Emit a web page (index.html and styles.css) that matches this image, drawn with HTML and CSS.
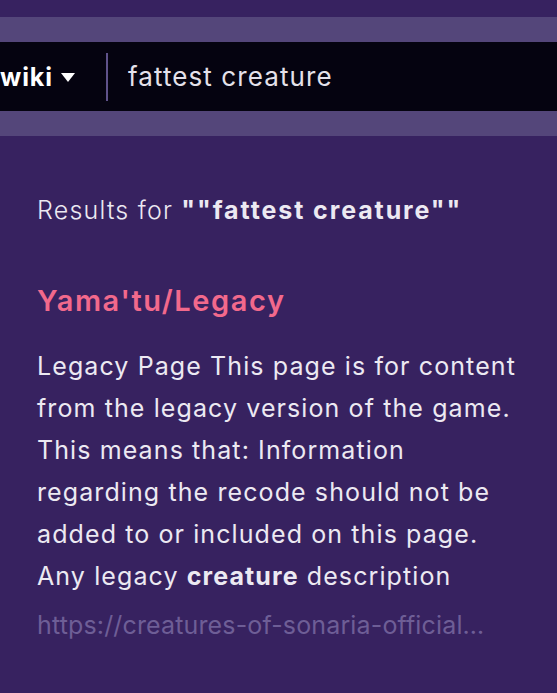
FILE: index.html
```html
<!doctype html>
<html lang="en">
<head>
  <meta charset="UTF-8">
  <meta name="viewport" content="width=device-width, initial-scale=1.0">
  <title>Search results</title>
  <link rel="stylesheet" href="styles.css">
</head>
<body>

<div class="top-gap"></div>

<div class="search-wrap">
  <div class="search-bar">
    <button class="scope">wiki <span class="caret"></span></button>
    <span class="divider"></span>
    <span class="query">fattest creature</span>
  </div>
</div>

<div class="results">
  <p class="summary">Results for <strong>""fattest creature""</strong></p>

  <div class="result">
    <a class="result-title" href="#">Yama'tu/Legacy</a>
    <p class="snippet">Legacy Page This page is for content from the legacy version of the game. This means that: Information regarding the recode should not be added to or included on this page. Any legacy <strong>creature</strong> description</p>
    <div class="result-url">https://creatures-of-sonaria-official.fandom.com/wiki/Yama%27tu/Legacy</div>
  </div>
</div>

</body>
</html>
```

FILE: styles.css
```css
body {
  margin: 0;
  background-color: #372260;
  font-family: 'Inter', 'Noto Sans', sans-serif;
  color: #ece9f2;
  overflow: hidden;
}

.top-gap {
  height: 17px;
}

.search-wrap {
  background-color: #54467a;
  padding: 25px 0;
}

.search-bar {
  background-color: #050310;
  height: 69px;
  display: flex;
  align-items: center;
}

.scope {
  background: none;
  border: none;
  padding: 0;
  margin-left: 0;
  color: #ffffff;
  font-family: inherit;
  font-size: 25px;
  font-weight: 700;
  letter-spacing: 0.9px;
  display: flex;
  align-items: center;
  gap: 8px;
}

.caret {
  width: 0;
  height: 0;
  border-left: 7.5px solid transparent;
  border-right: 7.5px solid transparent;
  border-top: 9px solid #ffffff;
  margin-top: 2px;
}

.divider {
  width: 2px;
  height: 48px;
  background-color: #5f528a;
  margin: 0 20px 0 31px;
}

.query {
  font-size: 26px;
  letter-spacing: 1.1px;
  color: #e4e1ea;
}

.results {
  padding: 58px 32px 0 37px;
}

.summary {
  margin: 0;
  font-size: 25px;
  font-weight: 300;
  letter-spacing: 1.2px;
  line-height: 32px;
}

.summary strong {
  font-weight: 700;
  letter-spacing: 1.9px;
}

.result {
  margin-top: 57px;
}

.result-title {
  display: block;
  color: #f2698c;
  font-size: 29px;
  font-weight: 600;
  letter-spacing: 1.6px;
  text-decoration: none;
  line-height: 36px;
}

.snippet {
  margin: 26px 0 0;
  font-size: 25px;
  letter-spacing: 1.1px;
  line-height: 42px;
}

.snippet strong {
  font-weight: 700;
}

.result-url {
  margin-top: 10px;
  max-width: 449px;
  font-size: 25px;
  letter-spacing: 0.15px;
  line-height: 36px;
  color: #6e5e96;
  white-space: nowrap;
  overflow: hidden;
  text-overflow: ellipsis;
}
```
